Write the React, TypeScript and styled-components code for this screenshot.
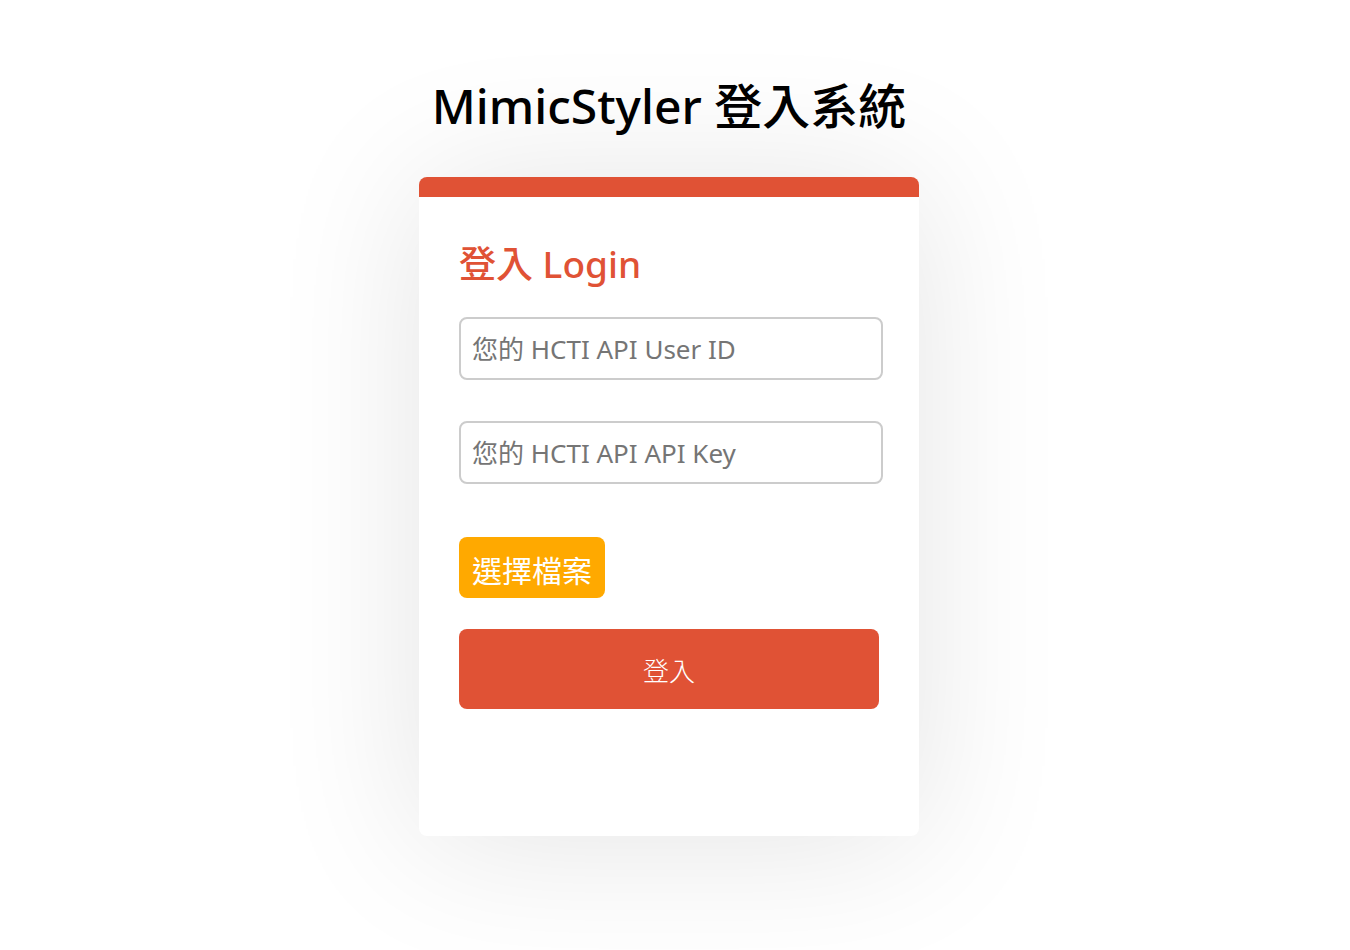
import React from "react";
import styled, { createGlobalStyle } from "styled-components";

const GlobalStyle = createGlobalStyle`
  html, body {
    margin: 0;
    padding: 0;
    background: #ffffff;
  }
  body {
    font-family: "Noto Sans", "Noto Sans CJK TC", sans-serif;
  }
`;

const Page = styled.div`
  display: flex;
  flex-direction: column;
  align-items: center;
  padding: 74px 12px 0 0;
  min-height: 950px;
  box-sizing: border-box;
`;

const Title = styled.h1`
  margin: 0 0 39px;
  font-size: 48px;
  line-height: 64px;
  font-weight: 500;
  color: #000;
  font-family: "Noto Sans", "Noto Sans CJK TC", sans-serif;
`;

const Card = styled.div`
  width: 500px;
  box-sizing: border-box;
  background: #fff;
  border-top: 20px solid #e05235;
  border-radius: 8px;
  padding: 43px 40px 127px;
  box-shadow: 0 6px 150px rgba(0, 0, 0, 0.11);
`;

const Heading = styled.h2`
  margin: 0 0 29px;
  font-size: 37px;
  line-height: 48px;
  font-weight: 500;
  color: #e05235;
`;

const Form = styled.form`
  display: flex;
  flex-direction: column;
  align-items: flex-start;
`;

const Input = styled.input`
  width: 424px;
  height: 63px;
  box-sizing: border-box;
  border: 2px solid #cccccc;
  border-radius: 8px;
  padding: 0 11px;
  margin-bottom: 41px;
  font-family: "Noto Sans", "Noto Sans CJK TC", sans-serif;
  font-size: 26px;
  color: #333;
  outline: none;
  &::placeholder {
    color: #757575;
  }
`;

const FileButton = styled.label`
  display: inline-flex;
  align-items: center;
  justify-content: center;
  height: 61px;
  padding: 2px 13px 0;
  box-sizing: border-box;
  margin-top: 12px;
  margin-bottom: 31px;
  background: #ffa900;
  color: #fff;
  border-radius: 8px;
  font-size: 30px;
  cursor: pointer;
  input {
    display: none;
  }
`;

const SubmitButton = styled.button`
  width: 420px;
  height: 80px;
  border: none;
  border-radius: 8px;
  background: #e05235;
  color: #fff;
  font-family: "Noto Sans CJK TC", sans-serif;
  font-size: 26px;
  font-weight: 300;
  cursor: pointer;
`;

export default function App() {
  return (
    <>
      <GlobalStyle />
      <Page>
        <Title>MimicStyler 登入系統</Title>
        <Card>
          <Heading>登入 Login</Heading>
          <Form onSubmit={(e) => e.preventDefault()}>
            <Input type="text" placeholder="您的 HCTI API User ID" />
            <Input type="password" placeholder="您的 HCTI API API Key" />
            <FileButton>
              選擇檔案
              <input type="file" />
            </FileButton>
            <SubmitButton type="submit">登入</SubmitButton>
          </Form>
        </Card>
      </Page>
    </>
  );
}
